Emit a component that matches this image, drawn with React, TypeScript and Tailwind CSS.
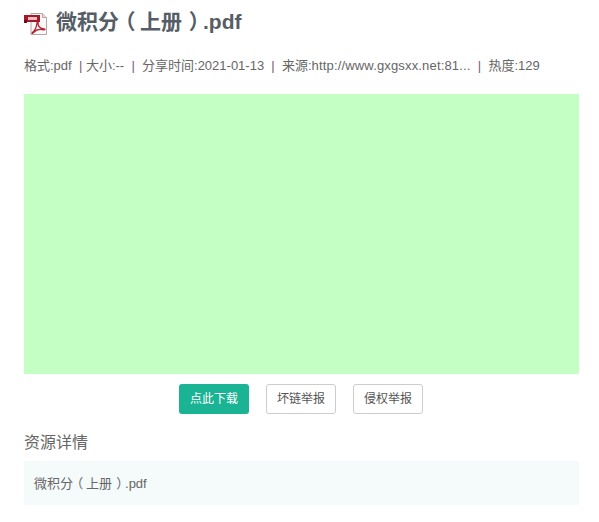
const font = "font-['Liberation_Sans','Noto_Sans_CJK_SC',sans-serif]";

function PdfIcon() {
  return (
    <svg width="25" height="24" viewBox="0 0 25 24" className="shrink-0 mt-[2px]">
      <path d="M8 1.5H19.5L23.5 5.5V22.5H8Z" fill="#fbf8f8" stroke="#b9a4a6" strokeWidth="1" />
      <path d="M19.5 1.5V5.5H23.5" fill="#e4dcdc" stroke="#b9a4a6" strokeWidth="1" />
      <rect x="1" y="3" width="16" height="7" fill="#a5182c" />
      <rect x="1" y="8" width="3" height="3" fill="#6e0f1c" />
      <rect x="5" y="5" width="9" height="3" fill="#f3d9dc" opacity="0.85" />
      <path
        d="M9.5 20.5C11.5 19 13.5 15.5 14 11C14.3 9.5 15.3 9.5 15.1 11.5C14.9 14 17 16.5 21 16.8C22.5 17 22 18 20.5 17.8C16.5 17 13 17.5 10.5 20.5C9.5 21.8 8.5 21.3 9.5 20.5Z"
        fill="none"
        stroke="#b3202f"
        strokeWidth="1.3"
      />
    </svg>
  );
}

function Title() {
  return (
    <>
      微积分<span className="[font-feature-settings:'halt'] pl-[0.29em] pr-[0.21em]">（</span>上册<span className="[font-feature-settings:'halt'] pl-[0.32em] pr-[0.18em]">）</span>.pdf
    </>
  );
}

export default function App() {
  return (
    <div className={`${font} w-[599px] h-[522px] bg-white pl-6 pr-5 overflow-hidden`}>
      <div className="flex items-start gap-2 pt-[10px] -ml-[1px]">
        <PdfIcon />
        <h1 className="text-[21px] leading-[24px] font-bold text-[#555d66]">
          <Title />
        </h1>
      </div>

      <div className="mt-[21px] text-[13px] leading-[18px] text-[#666] whitespace-pre">
        格式:pdf <span className="text-[#75607a]"> | </span>大小:-- <span className="text-[#75607a]"> | </span> 分享时间:2021-01-13 <span className="text-[#75607a]"> | </span> 来源:<span className="tracking-[0.16px]">http://www.gxgsxx.net:81...</span> <span className="text-[#75607a]"> | </span> 热度:129
      </div>

      <div className="mt-[19px] h-[280px] bg-[#c4ffc4]" />

      <div className="mt-[10px] flex justify-center gap-[17px] pr-[1px] text-[12px]">
        <button className="w-[70px] h-[30px] rounded-[3px] bg-[#1ab394] text-white">点此下载</button>
        <button className="w-[70px] h-[30px] rounded-[3px] border border-[#ccc] bg-white text-[#555]">坏链举报</button>
        <button className="w-[70px] h-[30px] rounded-[3px] border border-[#ccc] bg-white text-[#555]">侵权举报</button>
      </div>

      <h2 className="mt-[18px] text-[16px] leading-[22px] font-normal text-[#666]">资源详情</h2>

      <div className="mt-[7px] h-[44px] bg-[#f5fafa] px-[10px] pt-[1px] flex items-center text-[13px] text-[#666]">
        <div>
          <Title />
        </div>
      </div>
    </div>
  );
}
